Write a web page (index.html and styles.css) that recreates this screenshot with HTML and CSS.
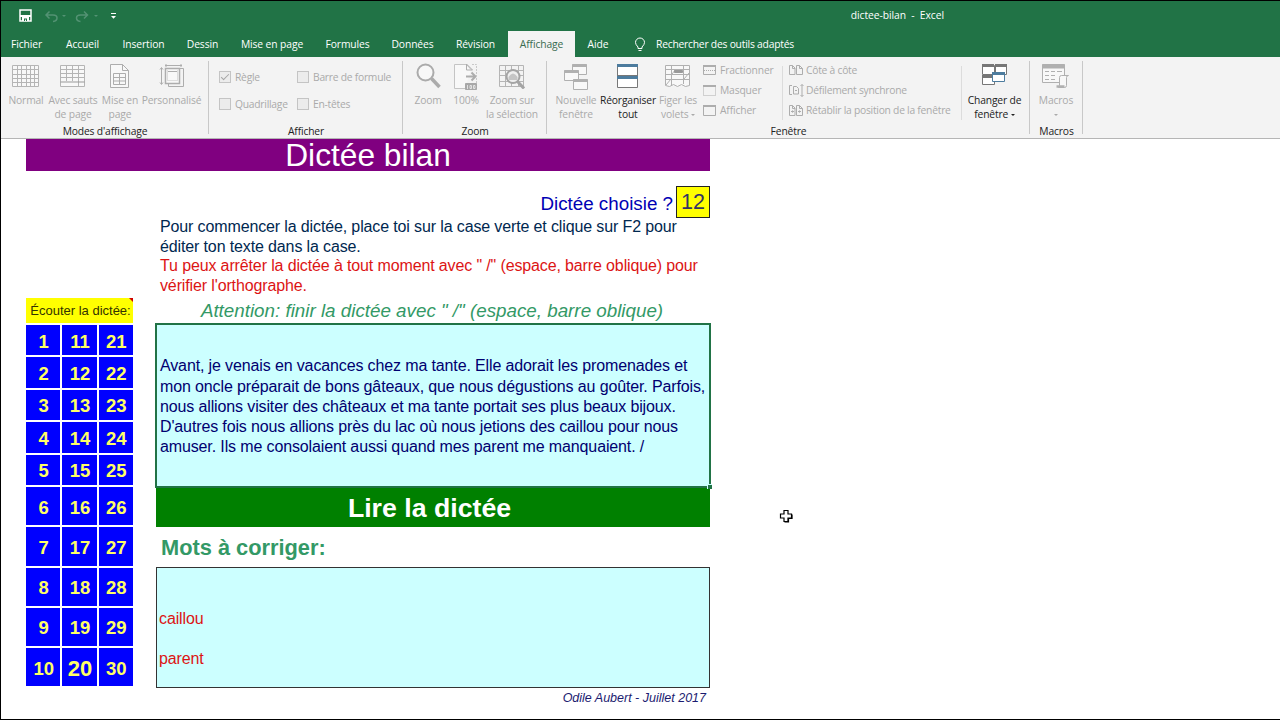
FILE: index.html
```html
<!DOCTYPE html>
<html lang="fr">

<head>
    <meta charset="UTF-8">
    <meta name="viewport" content="width=device-width, initial-scale=1.0">
    <title>dictee-bilan - Excel</title>
    <link rel="stylesheet" href="styles.css">
</head>

<body>
    <div class="window">
        <div class="titlebar">
            <div class="quick">
                <svg width="100" height="16" viewBox="0 0 100 16" fill="none">
                    <path d="M1 2h11v11H1z" stroke="#fff" stroke-width="1.500" />
                    <path d="M1 7h11v2H1zM3 9h7v4H3z" fill="#fff" />
                    <path d="M5 10.500h3V13H7v-1.500H6V13H5z" fill="#217346" />
                    <g stroke="#539273" stroke-width="1.500">
                        <path d="M30.500 3.500l-3.500 3.500l3.500 3.500M27.500 7h6.500q4 0 4 3t-4 3.500" />
                        <path d="M65 3.500l3.500 3.500l-3.500 3.500M68 7h-6.500q-4 0-4 3t4 3.500" />
                    </g>
                    <path d="M43 7h4l-2 2zM75 7h4l-2 2z" fill="#539273" />
                    <path d="M92 5.500h5" stroke="#fff" />
                    <path d="M92 8h5l-2.500 2.700z" fill="#fff" />
                </svg>
            </div>
            <div class="doc-name">dictee-bilan&nbsp; -&nbsp; Excel</div>
        </div>
        <div class="tabs">
            <a class="tab t-fichier">Fichier</a>
            <a class="tab t-accueil">Accueil</a>
            <a class="tab t-insertion">Insertion</a>
            <a class="tab t-dessin">Dessin</a>
            <a class="tab t-mise">Mise en page</a>
            <a class="tab t-formules">Formules</a>
            <a class="tab t-donnees">Données</a>
            <a class="tab t-revision">Révision</a>
            <a class="tab t-affichage active">Affichage</a>
            <a class="tab t-aide">Aide</a>
            <svg class="bulb" width="12" height="16" viewBox="0 0 12 16" fill="none" stroke="#fff">
                <path d="M4 11.500V10Q1.500 7.500 1.500 5.500a4.500 4.500 0 0 1 9 0Q10.500 7.500 8 10v1.500zM4.500 13.500h3" />
            </svg>
            <span class="search">Rechercher des outils adaptés</span>
        </div>

        <div class="ribbon">
            <div class="group g-modes">
                <div class="tools">
                    <div class="big w46">
                        <svg width="28" height="26" viewBox="0 0 28 26" fill="none" stroke="#b5b5b5">
                            <path fill="#f8f8f8" d="M.5 2.500h26v21H.5z" />
                            <path d="M.5 6.500h26M.5 11.500h26M.5 15.500h26M.5 19.500h26M5.500 2v21M9.500 2v21M14.500 2v21M18.500 2v21M22.500 2v21" />
                        </svg>
                        <span>Normal</span>
                    </div>
                    <div class="big w48">
                        <svg width="26" height="26" viewBox="0 0 26 26" fill="none" stroke="#b5b5b5">
                            <path fill="#f8f8f8" d="M.5 2.500h24v21H.5z" />
                            <path d="M.5 6.500h24M.5 10.500h24M.5 14.500h24M6.500 2v16M12.500 2v16M18.500 2v21" />
                            <path d="M.5 19h24" stroke="#999" />
                        </svg>
                        <span>Avec sauts<br>de page</span>
                    </div>
                    <div class="big w46">
                        <svg width="20" height="26" viewBox="0 0 20 26" fill="none" stroke="#adadad">
                            <path fill="#f8f8f8" d="M.5 1.500h12l6 6v17H.5z" />
                            <path d="M12.500 1.500v6h6M3.500 10.500h12v11h-12zM3.500 14.500h12M3.500 18h12M9.500 10v11" />
                        </svg>
                        <span>Mise en<br>page</span>
                    </div>
                    <div class="big w57">
                        <svg width="26" height="26" viewBox="0 0 26 26" fill="none" stroke="#adadad">
                            <path d="M2.500 5v16M1 6.500l1.500-2l1.500 2M1 19.500l1.500 2l1.500-2M6 2.500h17M7 1v3M22 1v3" />
                            <path fill="#f8f8f8" stroke-width="1.500" d="M6.500 5.500h14v15h-14z" />
                            <path d="M9 8.500h9M20 5.500h4.500v18h-15v-3" />
                            <path d="M8.500 7v11M18.500 7v11M8.500 17.500h10" stroke="#ddd" />
                        </svg>
                        <span>Personnalisé</span>
                    </div>
                </div>
                <div class="name">Modes d'affichage</div>
            </div>

            <div class="group g-show">
                <div class="checks">
                    <label class="check"><i class="on"></i>Règle</label>
                    <label class="check"><i></i>Barre de formule</label>
                    <label class="check"><i></i>Quadrillage</label>
                    <label class="check"><i></i>En-têtes</label>
                </div>
                <div class="name">Afficher</div>
            </div>

            <div class="group g-zoom">
                <div class="tools">
                    <div class="big w38">
                        <svg width="26" height="26" viewBox="0 0 26 26" fill="none" stroke="#ababab">
                            <circle cx="10.500" cy="9.500" r="8" stroke-width="2" fill="#f8f8f8" />
                            <path d="M16.500 15.500l8 8.500" stroke-width="3.500" />
                        </svg>
                        <span>Zoom</span>
                    </div>
                    <div class="big w38">
                        <svg width="24" height="28" viewBox="0 0 24 28" fill="none" stroke="#adadad">
                            <path fill="#f8f8f8" stroke="#c4c4c4" d="M11 25.500H.5v-24h12l4.500 5" />
                            <path d="M12.500 1v6h6z" />
                            <path d="M12 13.500h8.500M17.500 9.500l4 4l-4 4" stroke-width="2" />
                            <path d="M18 1.500h4.500v19" stroke="#c8c8c8" stroke-dasharray="2 1" />
                            <path fill="#a8a8a8" stroke="#a8a8a8" d="M11.500 20.500h11v6h-11z" />
                            <path d="M13.500 22v4M16 22.500h1.500v3H16zM19.500 22.500h1.500v3h-1.500z" stroke="#f0f0f0" stroke-width=".8" />
                        </svg>
                        <span>100%</span>
                    </div>
                    <div class="big w54">
                        <svg width="26" height="26" viewBox="0 0 26 26" fill="none" stroke="#b5b5b5">
                            <path d="M.5 2.500h24v21H.5zM.5 7.500h24M.5 12.500h24M.5 18.500h24M6.500 2v21M12.500 2v21M19.500 2v21" />
                            <circle cx="14" cy="13.500" r="6.500" fill="#efefef" stroke="#a4a4a4" stroke-width="2" />
                            <path d="M9.500 14q4.500-7 9 0v3h-9z" fill="#c5c5c5" stroke="none" />
                            <path d="M18.500 18.500l6.500 7" stroke="#a4a4a4" stroke-width="3" />
                        </svg>
                        <span>Zoom sur<br>la sélection</span>
                    </div>
                </div>
                <div class="name">Zoom</div>
            </div>

            <div class="group g-window">
                <div class="tools">
                    <div class="big w46">
                        <svg width="24" height="28" viewBox="0 0 24 28" fill="#f8f8f8" stroke="#b0b0b0">
                            <path d="M8.500 1.500h14v10h-14z" />
                            <path d="M8.500 2.500h14" stroke-width="3" />
                            <path d="M.5 7.500h14v10H.5z" />
                            <path d="M.5 8.500h14" stroke-width="3" />
                            <path d="M9.500 16.500h14v10h-14z" />
                            <path d="M9.500 17.500h14" stroke-width="3" />
                        </svg>
                        <span>Nouvelle<br>fenêtre</span>
                    </div>
                    <div class="big w58 enabled">
                        <svg width="22" height="26" viewBox="0 0 22 26" fill="#fff" stroke="#777">
                            <path d="M.5 1.500h20v23H.5z" />
                            <path d="M0 2.500h21M0 14.500h21" stroke="#4d7c9e" stroke-width="3" />
                            <path d="M0 12.500h21" />
                        </svg>
                        <span>Réorganiser<br>tout</span>
                    </div>
                    <div class="big w42">
                        <svg width="26" height="26" viewBox="0 0 26 26" fill="none" stroke="#b0b0b0">
                            <path fill="#f8f8f8" d="M.5 2.500h24v20l-4 1l-4-2l-4 2l-4-2l-4 2l-4-1z" />
                            <path d="M.5 6.500h24M.5 11.500h24M.5 16.500h24M6.500 2v20M18.500 2v19M1 22l5-6M7 11l4-5M19 16l5-6" />
                            <path fill="#999" stroke="#999" d="M9.500 7.500h8v2h-8z" />
                        </svg>
                        <span>Figer les<br>volets <b class="caret"></b></span>
                    </div>
                    <div class="list l-split">
                        <p><svg width="14" height="13" viewBox="0 0 14 13" fill="none" stroke="#adadad"><path d="M.5 1.500h12v9H.5z" /><path d="M0 2h13" stroke-width="2" /><path d="M1 6.500h12" stroke-dasharray="1 1" /></svg>Fractionner</p>
                        <p><svg width="14" height="13" viewBox="0 0 14 13" fill="none" stroke="#adadad"><path d="M.5 1.500v10h12v-10" stroke-dasharray="1 1" /><path d="M0 2h13" stroke-width="2" /></svg>Masquer</p>
                        <p><svg width="14" height="13" viewBox="0 0 14 13" fill="none" stroke="#adadad"><path d="M.5 1.500h12v10H.5z" /><path d="M0 2h13" stroke-width="2" /></svg>Afficher</p>
                    </div>
                    <div class="list l-side">
                        <p><svg width="15" height="13" viewBox="0 0 15 13" fill="none" stroke="#adadad"><path d="M.5 1.500h3l2.500 2.500v6.500H.5zM7.500 1.500h3l3 3v6h-6zM3.500 1.500v3H6M10.500 1.500v3h3" /></svg>Côte à côte</p>
                        <p><svg width="15" height="13" viewBox="0 0 15 13" fill="none" stroke="#adadad"><path d="M3 1.500H.5v9H3M4.500 2.500h3l2 2v5.500h-5zM13 .5v12M11.500 2l1.500-1.500l1.500 1.500M11.500 11l1.500 1.500l1.500-1.500M6 6.500h2" /></svg>Défilement synchrone</p>
                        <p><svg width="15" height="13" viewBox="0 0 15 13" fill="none" stroke="#adadad"><path d="M.5 1.500h3l2.500 2.500v7.500H.5zM7.500 1.500h3l3 3v7h-6zM3.500 1.500v3H6M10.500 1.500v3h3M2 7.500h3M9 7.500h3" /><path d="M3 6l2 1.500L3 9zM11 6L9 7.500L11 9z" fill="#adadad" stroke="none" /></svg>Rétablir la position de la fenêtre</p>
                    </div>
                    <div class="big w66 enabled">
                        <svg width="26" height="26" viewBox="0 0 26 26" fill="#fff" stroke="#777">
                            <path d="M.5 2.500h12v9H.5zM13.500 2.500h11v9h-11z" />
                            <path d="M0 2.500h12M13 2.500h12" stroke-width="3" />
                            <path d="M.5 13.500h12v8H.5z" />
                            <path d="M0 13.500h10" stroke-width="3" />
                            <path d="M10.500 9.500h12v9h-12z" stroke="#4d7c9e" />
                            <path d="M10 10.500h13" stroke="#4d7c9e" stroke-width="3" />
                        </svg>
                        <span>Changer de<br>fenêtre <b class="caret"></b></span>
                    </div>
                </div>
                <div class="name">Fenêtre</div>
            </div>

            <div class="group g-macros">
                <div class="tools">
                    <div class="big w52">
                        <svg width="28" height="26" viewBox="0 0 28 26" fill="#f8f8f8" stroke="#b0b0b0">
                            <path d="M.5 1.500h22v18H.5z" />
                            <path d="M0 3.500h23" stroke-width="4" />
                            <path d="M3 8.500h4M9 8.500h4M15 8.500h5M3 12.500h4M9 12.500h4M3 16.500h4M9 16.500h4" />
                            <path d="M17.500 14.500q0-2 2-2h7q-2 0-2 2v8q0 2-2 2h-6q1 0 1-2z" />
                            <path d="M14.500 23.500h8" stroke-width="2.500" />
                        </svg>
                        <span>Macros<br><b class="caret"></b></span>
                    </div>
                </div>
                <div class="name">Macros</div>
            </div>
        </div>

        <div class="sheet">
            <h1>Dictée bilan</h1>
            <div class="cols">
                <div class="listen">
                    <div class="listen-title">Écouter la dictée:</div>
                    <div class="numbers">
                        <a>1</a><a>11</a><a>21</a>
                        <a>2</a><a>12</a><a>22</a>
                        <a>3</a><a>13</a><a>23</a>
                        <a>4</a><a>14</a><a>24</a>
                        <a>5</a><a>15</a><a>25</a>
                        <a>6</a><a>16</a><a>26</a>
                        <a>7</a><a>17</a><a>27</a>
                        <a>8</a><a>18</a><a>28</a>
                        <a>9</a><a>19</a><a>29</a>
                        <a>10</a><a class="large">20</a><a>30</a>
                    </div>
                </div>
                <div class="main">
                    <div class="choice">
                        <span>Dictée choisie ?</span>
                        <div class="choice-num">12</div>
                    </div>
                    <div class="intro">
                        <p>Pour commencer la dictée, place toi sur la case verte et clique sur F2 pour<br>éditer ton texte dans la case.</p>
                        <p class="red">Tu peux arrêter la dictée à tout moment avec " /" (espace, barre oblique) pour<br>vérifier l'orthographe.</p>
                    </div>
                    <div class="warning">Attention: finir la dictée avec " /" (espace, barre oblique)</div>
                    <div class="dictation">
                        <p>Avant, je venais en vacances chez ma tante. Elle adorait les promenades et<br>mon oncle préparait de bons gâteaux, que nous dégustions au goûter. Parfois,<br>nous allions visiter des châteaux et ma tante portait ses plus beaux bijoux.<br>D'autres fois nous allions près du lac où nous jetions des caillou pour nous<br>amuser. Ils me consolaient aussi quand mes parent me manquaient. /</p>
                        <i class="handle"></i>
                    </div>
                    <div class="read">Lire la dictée</div>
                    <h2>Mots à corriger:</h2>
                    <div class="words">
                        <p>caillou</p>
                        <p>parent</p>
                    </div>
                    <div class="author">Odile Aubert - Juillet 2017</div>
                </div>
            </div>
        </div>

        <svg class="cursor" width="14" height="14" viewBox="0 0 14 14">
            <path d="M5 1.500h4v3.500h3.500v4H9v3.500H5V9H1.500V5H5z" fill="#fff" stroke="#000" stroke-width="1.200" />
            <path d="M5.500 13h4V9.500H13V5.500" fill="none" stroke="#000" stroke-width="1.200" />
        </svg>
    </div>
</body>

</html>
```
FILE: styles.css
```css
* {
    margin: 0;
    padding: 0;
    box-sizing: border-box;
}

body {
    background: #fff;
    font-family: "Liberation Sans", Arial, sans-serif;
}

.window {
    position: relative;
    width: 1280px;
    height: 720px;
    border: 1px solid #000;
    border-right: 0;
    overflow: hidden;
}

/* title bar and tabs */
.titlebar,
.tabs,
.ribbon {
    font-family: "Open Sans", "Noto Sans", sans-serif;
    font-size: 10.3px;
    letter-spacing: -0.1px;
}

.titlebar {
    display: flex;
    justify-content: space-between;
    height: 30px;
    padding: 7px 336px 0 18px;
    background: #217346;
    color: #fff;
}

.doc-name {
    line-height: 15px;
    letter-spacing: -0.05px;
}

.tabs {
    display: flex;
    height: 26px;
    background: #217346;
    color: #fff;
    line-height: 26px;
    white-space: nowrap;
}

.tab {
    display: flex;
    justify-content: center;
}

.t-fichier { width: 51px; }
.t-accueil { width: 61px; }
.t-insertion { width: 61px; }
.t-dessin { width: 57px; }
.t-mise { width: 82px; }
.t-formules { width: 69px; }
.t-donnees { width: 61px; }
.t-revision { width: 65px; }
.t-affichage { width: 67px; }
.t-aide { width: 46px; }

.tab.active {
    background: #f3f3f3;
    color: #3a6b50;
}

.bulb {
    margin: 6px 10px 0 13px;
}

.search {
    letter-spacing: -0.22px;
}

/* ribbon */
.ribbon {
    display: flex;
    height: 82px;
    background: #f3f3f3;
    border-bottom: 1px solid #b5b5b5;
    color: #aaa;
    letter-spacing: -0.15px;
    white-space: nowrap;
}

.group {
    display: flex;
    flex-direction: column;
    position: relative;
    height: 81px;
}

.group::after {
    content: "";
    position: absolute;
    right: 0;
    top: 4px;
    width: 1px;
    height: 73px;
    background: #c8c8c8;
}

.g-modes { width: 208px; }
.g-show { width: 194px; }
.g-zoom { width: 144px; }
.g-window { width: 483px; }
.g-macros { width: 53px; }

.name {
    color: #222;
    line-height: 14px;
    text-align: center;
}

.tools,
.checks {
    height: 67px;
}

.tools {
    display: flex;
    padding-top: 6px;
}

.g-modes .tools { padding-left: 2px; }
.g-zoom .tools { padding-left: 6px; }
.g-window .tools { padding-left: 6px; }

.big {
    display: flex;
    flex-direction: column;
    align-items: center;
    text-align: center;
    line-height: 14px;
}

.big svg {
    flex: none;
    margin-bottom: 4px;
}

.big svg[height="28"] {
    margin-bottom: 2px;
}

.big span {
    margin: 0 -6px;
}

.w38 { width: 38px; }
.w42 { width: 42px; }
.w46 { width: 46px; }
.w48 { width: 48px; }
.w52 { width: 52px; }
.w54 { width: 54px; }
.w57 { width: 57px; }
.w58 { width: 58px; }
.w66 { width: 65px; }

.enabled {
    color: #222;
}

.caret {
    display: inline-block;
    border: 2.5px solid transparent;
    border-top-color: currentColor;
    border-bottom: 0;
    vertical-align: 2px;
}

.checks {
    display: grid;
    grid-template-columns: 78px 100px;
    grid-template-rows: 27px 27px;
    padding: 6px 0 0 10px;
}

.check {
    display: flex;
    align-items: center;
    letter-spacing: -0.25px;
}

.check i {
    width: 12px;
    height: 12px;
    margin-right: 4px;
    border: 1px solid #c4c4c4;
    background: #ececec;
}

.check i.on::after {
    content: "";
    display: block;
    width: 7px;
    height: 3px;
    margin: 2px 0 0 1px;
    border: solid #a5a5a5;
    border-width: 0 0 1.5px 1.5px;
    transform: rotate(-45deg);
}

.list {
    height: 54px;
    margin-top: 3px;
}

.list p {
    display: flex;
    align-items: center;
    height: 20.2px;
}

.list p:first-child {
    margin-top: -6px;
}

.list svg {
    margin-right: 3px;
}

.l-split {
    width: 80px;
    margin-left: 4px;
    border-right: 1px solid #dcdcdc;
}

.l-side {
    width: 179px;
    padding-left: 6px;
    border-right: 1px solid #dcdcdc;
    letter-spacing: -0.25px;
}

.l-side svg {
    margin-right: 2px;
}

/* worksheet */
.sheet {
    width: 711px;
    padding-left: 24px;
}

h1 {
    width: 684px;
    height: 32px;
    margin-left: 1px;
    background: #800080;
    color: #fff;
    font-size: 31.7px;
    font-weight: normal;
    line-height: 32px;
    text-align: center;
}

.cols {
    display: flex;
}

.listen {
    width: 107px;
    margin: 127px 0 0 1px;
}

.listen-title {
    position: relative;
    height: 25px;
    margin-bottom: 2px;
    padding-left: 2px;
    background: #ff0;
    color: #333300;
    font-size: 13px;
    line-height: 26px;
    text-align: center;
    white-space: nowrap;
}

/* comment mark in the corner of the cell */
.listen-title::after {
    content: "";
    position: absolute;
    right: 0;
    top: 0;
    border: 2.5px solid #d00000;
    border-left-color: transparent;
    border-bottom-color: transparent;
}

.numbers {
    display: grid;
    grid-template-columns: repeat(3, 1fr);
    grid-template-rows: repeat(5, 30.4px) repeat(5, 38.3px);
    gap: 2px;
}

.numbers a {
    display: flex;
    align-items: center;
    justify-content: center;
    padding: 3px 0 0 1px;
    background: #00f;
    color: #ffff66;
    font-size: 18.5px;
    font-weight: bold;
}

.numbers a.large {
    font-size: 22px;
}

.main {
    width: 556px;
    margin-left: 22px;
}

.choice {
    display: flex;
    justify-content: flex-end;
    height: 32px;
    margin: 15px 1px 0 0;
    color: #0000b4;
    font-size: 18.8px;
    line-height: 35px;
}

.choice-num {
    width: 34px;
    height: 32px;
    margin-left: 3px;
    border: 1px solid #222;
    background: #ff0;
    color: #333366;
    font-size: 21.5px;
    line-height: 31px;
    text-align: center;
}

.intro {
    height: 80px;
    margin: -2px 0 0 5px;
    padding-top: 1px;
    color: #002850;
    font-size: 16px;
    letter-spacing: -0.13px;
    line-height: 19.6px;
    white-space: nowrap;
}

.intro .red {
    color: #dc1414;
}

.warning {
    height: 27px;
    padding-right: 2px;
    color: #339966;
    font-size: 18.8px;
    font-style: italic;
    line-height: 30px;
    text-align: center;
    white-space: nowrap;
}

.dictation {
    position: relative;
    display: flex;
    align-items: center;
    height: 165px;
    padding: 3px 0 0 3px;
    border: 2px solid #217346;
    background: #ccffff;
    color: #000070;
    font-size: 16px;
    letter-spacing: -0.13px;
    line-height: 20.2px;
    white-space: nowrap;
}

.handle {
    position: absolute;
    right: -3px;
    bottom: -3px;
    width: 5px;
    height: 5px;
    border: solid #ccffff;
    border-width: 1px 0 0 1px;
    background: #217346;
}

.read {
    height: 39px;
    margin: 0 1px;
    padding-right: 7px;
    background: #008000;
    color: #fff;
    font-size: 26.7px;
    font-weight: bold;
    line-height: 40px;
    text-align: center;
}

h2 {
    height: 40px;
    padding-left: 6px;
    color: #339966;
    font-size: 21.8px;
    line-height: 42px;
}

.words {
    height: 121px;
    margin: 0 1px;
    padding: 31px 2px 0;
    border: 1px solid #333;
    background: #ccffff;
    color: #dc1414;
    font-size: 16px;
    letter-spacing: -0.12px;
    line-height: 40.3px;
}

.author {
    padding-right: 5px;
    color: #1b1b70;
    font-size: 12.5px;
    font-style: italic;
    line-height: 20px;
    text-align: right;
}

/* mouse pointer */
.cursor {
    position: absolute;
    left: 778px;
    top: 508px;
}
```
